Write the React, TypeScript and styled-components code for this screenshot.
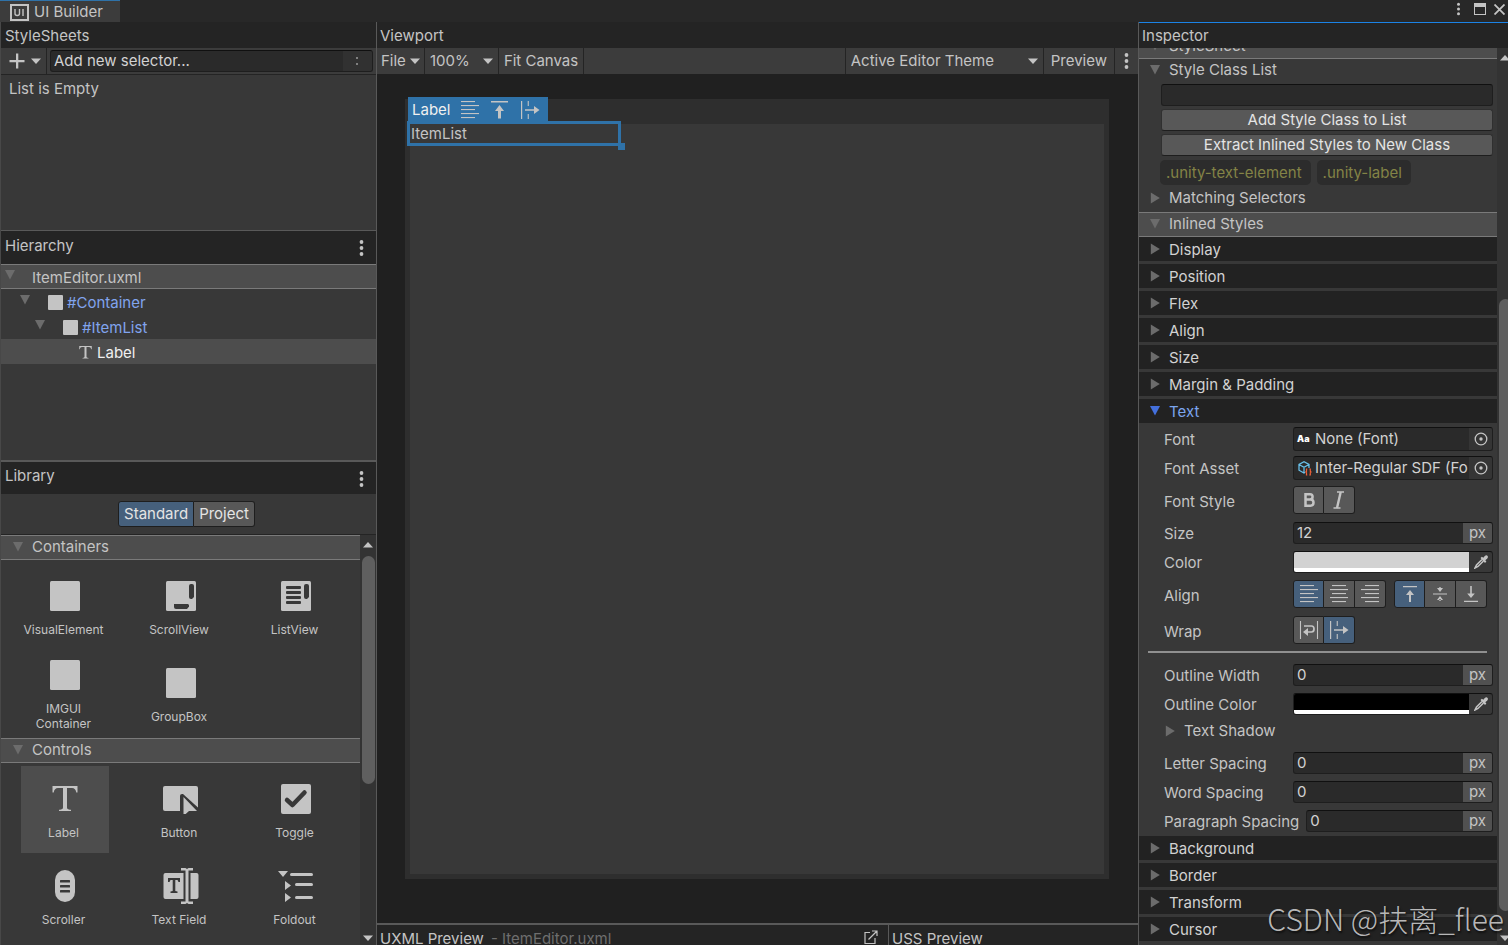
import React from 'react';
import styled, { createGlobalStyle, css } from 'styled-components';

const color = {
  bg: '#383838',
  dark: '#242424',
  darker: '#202020',
  section: '#222222',
  toolbar: '#3c3c3c',
  header: '#4d4d4d',
  headerLine: '#7a7a7a',
  line: '#595959',
  field: '#2a2a2a',
  fieldLine: '#1e1e1e',
  button: '#585858',
  pressed: '#46607c',
  text: '#c4c4c4',
  bright: '#e4e4e4',
  icon: '#c4c4c4',
  link: '#81a4ee',
  select: '#2f72a8',
};

const GlobalStyle = createGlobalStyle`
  *, *::before, *::after { box-sizing: border-box; }
  body {
    margin: 0;
    background: ${color.dark};
    color: ${color.text};
    font: 15px/20px Inter, "Noto Sans CJK SC", sans-serif;
    overflow: hidden;
  }
  button, input, select { font: inherit; color: inherit; margin: 0; padding: 0; border: 0; background: none; border-radius: 0; outline: 0; }
  h2 { margin: 0; font: inherit; }
  ul { margin: 0; padding: 0; list-style: none; }
  svg { display: block; flex: none; }
`;

/* ---------- window frame ---------- */

const Window = styled.div`
  display: flex;
  flex-direction: column;
  height: 100vh;
  position: relative;
  overflow: hidden;
`;

const TitleBar = styled.header`
  display: flex;
  justify-content: space-between;
  height: 22px;
  flex: none;
  background: #282828;
`;

const WindowTab = styled.button`
  display: flex;
  align-items: center;
  gap: 5px;
  width: 120px;
  padding: 1px 0 0 10px;
  border-top: 1px solid ${color.select};
  background: ${color.toolbar};
`;

const WindowButtons = styled.div`
  display: flex;
  align-items: center;
  gap: 8px;
  height: 18px;
  padding-right: 3px;
  button:first-child { margin-right: 5px; }
`;

const IconButton = styled.button`
  display: flex;
  align-items: center;
  justify-content: center;
`;

const Columns = styled.div`
  display: grid;
  grid-template-columns: 377px minmax(0, 1fr) 370px;
  flex: 1;
  min-height: 0;
`;

const PanelTitle = styled.h2`
  display: flex;
  align-items: center;
  flex: none;
  height: 26px;
  padding: 1px 4px 0;
  background: ${color.dark};
`;

const ViewportTitle = styled(PanelTitle)`
  padding-left: 3px;
`;

const DockTitle = styled(PanelTitle)<{ $height: number }>`
  justify-content: space-between;
  height: ${p => p.$height}px;
  padding: 0 12px 4px 4px;
`;

const KebabButton = styled(IconButton)`
  padding-top: 5px;
`;

const Toolbar = styled.div`
  display: flex;
  align-items: stretch;
  flex: none;
  height: 26px;
  background: ${color.toolbar};
`;

/* ---------- left column ---------- */

const LeftColumn = styled.aside`
  display: flex;
  flex-direction: column;
  min-height: 0;
  background: ${color.bg};
  border-left: 1px solid #484848;
  border-right: 1px solid ${color.line};
`;

const StyleSheetsPanel = styled.section`
  flex: none;
  height: 208px;
`;

const HierarchyPanel = styled.section`
  flex: none;
  height: 230px;
  border-top: 1px solid ${color.line};
`;

const LibraryPanel = styled.section`
  display: flex;
  flex-direction: column;
  flex: 1;
  min-height: 0;
  border-top: 2px solid ${color.line};
`;

const SelectorBar = styled(Toolbar)`
  height: 27px;
  border-bottom: 1px solid ${color.dark};
  align-items: center;
`;

const AddButton = styled.button`
  display: flex;
  align-items: center;
  gap: 6px;
  height: 26px;
  width: 46px;
  padding-left: 8px;
  border-right: 1px solid ${color.dark};
`;

const FieldBox = styled.div`
  display: flex;
  flex: 1;
  min-width: 0;
  height: 22px;
  background: ${color.field};
  border: 1px solid ${color.fieldLine};
  border-top-color: #101010;
  border-radius: 3px;
  overflow: hidden;
`;

const SelectorField = styled(FieldBox)`
  margin: 0 3px;
`;

const TextInput = styled.input`
  flex: 1;
  width: 0;
  min-width: 0;
  padding-left: 3px;
  color: #d2d2d2;
  &::placeholder { color: #d2d2d2; opacity: 1; }
`;

const FieldMenu = styled(IconButton)`
  width: 29px;
  background: #313131;
`;

const EmptyNote = styled.p`
  margin: 4px 8px;
`;

const TreeItem = styled.li<{ $depth: number; $kind?: 'root' | 'selected' | 'named' }>`
  display: flex;
  align-items: center;
  height: 25px;
  padding: 2px 0 0 ${p => 4 + p.$depth * 15}px;
  color: ${p => (p.$kind === 'named' ? color.link : p.$kind === 'selected' ? '#f0f0f0' : color.text)};
  ${p => p.$kind === 'selected' && css`background: ${color.header};`}
  ${p => p.$kind === 'root' && css`
    background: ${color.header};
    border-top: 1px solid ${color.headerLine};
    border-bottom: 1px solid ${color.headerLine};
  `}
`;

const TreeToggle = styled.button`
  width: 28px;
  height: 14px;
  flex: none;
  margin-bottom: 5px;
`;

const RootToggle = styled(TreeToggle)`
  width: 27px;
`;

const TreeIcon = styled.span`
  width: 19px;
`;

const TabStrip = styled.div`
  display: flex;
  justify-content: center;
  flex: none;
  height: 41px;
  padding: 7px 4px 7px 0;
  border-bottom: 1px solid ${color.dark};
`;

const SegmentButton = styled.button<{ $on?: boolean }>`
  display: flex;
  align-items: center;
  justify-content: center;
  padding: 0 5px;
  background: ${p => (p.$on ? color.pressed : color.button)};
  color: ${color.bright};
  border: 1px solid ${color.fieldLine};
  border-left-width: 0;
  &:first-child { border-left-width: 1px; border-radius: 3px 0 0 3px; }
  &:last-child { border-radius: 0 3px 3px 0; }
`;

const Scroller = styled.div`
  display: flex;
  flex: 1;
  min-height: 0;
`;

const ScrollBody = styled.div`
  flex: 1;
  min-width: 0;
  overflow: hidden;
`;

const ScrollBar = styled.div<{ $width: number }>`
  display: flex;
  flex-direction: column;
  align-items: flex-start;
  flex: none;
  width: ${p => p.$width}px;
  padding-left: 2px;
  background: #333333;
  overflow: hidden;
`;

const ScrollArrow = styled.button<{ $height: number }>`
  display: flex;
  align-items: center;
  flex: none;
  height: ${p => p.$height}px;
  padding-left: 1px;
`;

const ScrollThumb = styled.div<{ $before: number; $size: number; $after: number }>`
  display: grid;
  grid-template-rows: ${p => p.$before}fr ${p => p.$size}fr ${p => p.$after}fr;
  flex: 1;
  width: 13px;
  &::before {
    content: '';
    grid-row: 2;
    background: #5f5f5f;
    border-radius: 7px;
  }
`;

const FoldoutBar = styled.button`
  display: flex;
  align-items: center;
  gap: 9px;
  width: 100%;
  height: 25px;
  padding: 0 0 2px 11px;
  background: ${color.header};
  border-top: 1px solid ${color.headerLine};
  border-bottom: 1px solid ${color.headerLine};
`;

const LibraryBar = styled(FoldoutBar)`
  padding-left: 12px;
`;

const ItemGrid = styled.div`
  display: grid;
  grid-template-columns: repeat(3, 88px);
  grid-auto-rows: 87px;
  justify-content: space-between;
  padding: 3px 20px 1px;
`;

const LibraryItem = styled.button<{ $selected?: boolean }>`
  display: flex;
  flex-direction: column;
  align-items: center;
  justify-content: center;
  gap: 11px;
  padding: 4px 3px 0 0;
  font-size: 12px;
  line-height: 15px;
  white-space: pre-line;
  background: ${p => (p.$selected ? color.header : 'transparent')};
`;

/* ---------- viewport ---------- */

const CenterColumn = styled.main`
  display: flex;
  flex-direction: column;
  min-width: 0;
  min-height: 0;
`;

const ToolButton = styled.button<{ $pad?: number }>`
  display: flex;
  align-items: center;
  gap: 4px;
  padding: 0 ${p => p.$pad ?? 5}px;
  white-space: nowrap;
  border-right: 1px solid ${color.dark};
`;

const ToolSelect = styled.div<{ $width: number; $end?: boolean }>`
  position: relative;
  display: flex;
  width: ${p => p.$width}px;
  border-right: 1px solid ${color.dark};
  ${p => p.$end && css`margin-left: auto; border-left: 1px solid ${color.dark};`}
  select { appearance: none; width: 100%; padding-left: 5px; }
  svg { position: absolute; right: 5px; top: 10px; pointer-events: none; }
`;

const MenuButton = styled(IconButton)`
  width: 23px;
`;

const Stage = styled.div`
  display: flex;
  flex: 1;
  min-height: 0;
  padding: 25px 29px 44px 28px;
  background: ${color.darker};
`;

const CanvasFrame = styled.div`
  position: relative;
  display: flex;
  flex: 1;
  padding: 25px 5px 5px;
  background: #2e2e2e;
`;

const CanvasPage = styled.div`
  flex: 1;
  background: ${color.bg};
`;

const ElementTag = styled.div`
  position: absolute;
  left: 3px;
  top: -2px;
  display: flex;
  align-items: center;
  gap: 10px;
  width: 140px;
  height: 25px;
  padding-left: 4px;
  background: ${color.select};
  color: #f0f0f0;
`;

const ElementOutline = styled.div`
  position: absolute;
  left: 2px;
  top: 22px;
  width: 214px;
  height: 25px;
  padding-left: 1px;
  line-height: 19px;
  border: 3px solid ${color.select};
  &::after {
    content: '';
    position: absolute;
    right: -7px;
    bottom: -7px;
    width: 7px;
    height: 7px;
    background: ${color.select};
  }
`;

const PreviewBar = styled.footer`
  display: grid;
  grid-template-columns: minmax(0, 1fr) 250px;
  flex: none;
  height: 22px;
  border-top: 2px solid ${color.line};
  background: ${color.dark};
  overflow: hidden;
`;

const PreviewPane = styled.div`
  display: flex;
  justify-content: space-between;
  height: 20px;
  padding: 4px 10px 0 3px;
  line-height: 20px;
  & + & { border-left: 1px solid ${color.line}; }
`;

const Faded = styled.span`
  margin-left: 7px;
  color: #6e6e6e;
`;

/* ---------- inspector ---------- */

const Inspector = styled.aside`
  display: flex;
  flex-direction: column;
  min-height: 0;
  background: ${color.bg};
  border-left: 1px solid ${color.line};
`;

const InspectorTitle = styled(PanelTitle)`
  border-top: 1px solid #1b83e6;
  padding: 0 3px;
`;

const ScrolledContent = styled.div`
  margin-top: -14px;
`;

const ClassSection = styled.div`
  display: flex;
  flex-direction: column;
  gap: 3px;
  padding: 3px 4px 3px 22px;
`;

const PlainFoldout = styled.button`
  display: flex;
  align-items: center;
  gap: 9px;
  height: 22px;
  padding: 0 0 1px 11px;
`;

const ClassInput = styled.input`
  flex: none;
  height: 22px;
  background: ${color.field};
  border: 1px solid ${color.fieldLine};
  border-top-color: #101010;
  border-radius: 3px;
  padding: 0 4px;
`;

const WideButton = styled.button`
  height: 22px;
  background: ${color.button};
  color: ${color.bright};
  border: 1px solid #303030;
  border-bottom-color: ${color.fieldLine};
  border-radius: 3px;
  line-height: 20px;
`;

const Tags = styled.div`
  display: flex;
  gap: 6px;
  padding-top: 1px;
  margin-left: -1px;
`;

const Tag = styled.span`
  height: 25px;
  padding: 0 9px 0 6px;
  line-height: 25px;
  border-radius: 5px;
  background: #2c2c2c;
  color: #838346;
`;

const MatchingFoldout = styled(PlainFoldout)`
  margin: -1px 0 3px;
`;

const SectionList = styled.div`
  display: flex;
  flex-direction: column;
  gap: 3px;
`;

const SectionFoldout = styled.button<{ $active?: boolean }>`
  display: flex;
  align-items: center;
  gap: 9px;
  height: 24px;
  padding: 1px 0 0 11px;
  background: ${color.section};
  color: ${p => (p.$active ? '#7ba5ee' : '#d2d2d2')};
  svg { margin-bottom: 1px; }
`;

const TextFields = styled.div`
  padding: 1px 4px 1px 25px;
`;

const FieldRow = styled.div<{ $tall?: boolean }>`
  display: flex;
  align-items: center;
  height: ${p => (p.$tall ? 36 : 29)}px;
`;

const FieldLabel = styled.label`
  flex: none;
  min-width: 122px;
  margin-right: 7px;
  padding-top: 3px;
`;

const Unit = styled.button`
  width: 29px;
  background: #515151;
  line-height: 18px;
`;

const ObjectField = styled(FieldBox)`
  height: 24px;
  align-items: center;
  padding-left: 3px;
`;

const Picker = styled(IconButton)`
  width: 23px;
  height: 22px;
  background: #353535;
`;

const ColorInput = styled.input`
  appearance: none;
  flex: 1;
  min-width: 0;
  height: 20px;
  border-bottom: 4px solid #ffffff;
  &::-webkit-color-swatch-wrapper { padding: 0; }
  &::-webkit-color-swatch { border: 0; border-radius: 0; }
`;

const ColorBox = styled(FieldBox)`
  background: ${color.bg};
`;

const DropperButton = styled(IconButton)`
  width: 23px;
`;

const Toggles = styled.div`
  display: flex;
  height: 28px;
  margin-right: 8px;
  button { width: 31px; padding: 0; }
`;

const Divider = styled.hr`
  height: 2px;
  margin: 3px 6px 7px -16px;
  border: 0;
  background: #909090;
`;

const ShadowFoldout = styled.button`
  display: flex;
  align-items: center;
  gap: 9px;
  height: 26px;
  margin-bottom: 4px;
  padding-left: 1px;
`;

const Watermark = styled.div`
  position: absolute;
  right: 4px;
  bottom: 7px;
  font: 300 30px/40px "Noto Sans CJK SC", sans-serif;
  color: rgba(205, 205, 205, 0.9);
  text-shadow: 1px 2px 2px rgba(0, 0, 0, 0.6);
  pointer-events: none;
`;

/* ---------- icons ---------- */

const Arrow = ({ open, fill = '#6c6c6c' }: { open?: boolean; fill?: string }) => (
  <svg width="10" height="12" viewBox="0 0 10 12" fill={fill}>
    {open ? <path d="M0 1h10L5 10.500z" /> : <path d="M0.800 0.500v11L9.800 6z" />}
  </svg>
);

const Caret = ({ up }: { up?: boolean }) => (
  <svg width="10" height="6" viewBox="0 0 10 6" fill={color.icon}>
    <path d={up ? 'M5 0l5 5.500H0z' : 'M0 0.500h10L5 6z'} />
  </svg>
);

const Kebab = ({ small }: { small?: boolean }) => (
  <svg width="5" height="16" viewBox="0 0 5 16" fill={color.icon}>
    {(small ? [3.3, 8, 12.7] : [2, 8, 14]).map(y => (
      <circle key={y} cx="2.500" cy={y} r={small ? 1.5 : 1.9} />
    ))}
  </svg>
);

const Lines = ({ align }: { align: 'left' | 'center' | 'right' }) => {
  const spans = [14, 18, 14, 18, 14];
  return (
    <svg width="20" height="18" viewBox="0 0 20 18" fill={color.icon}>
      {spans.map((w, i) => {
        const x = align === 'left' ? 1 : align === 'center' ? (20 - w) / 2 : 19 - w;
        return <rect key={i} x={x} y={i * 4} width={w} height="1.100" />;
      })}
    </svg>
  );
};

const AlignTop = () => (
  <svg width="20" height="18" viewBox="0 0 20 18" fill={color.icon}>
    <path d="M1 0h17v1.400H1zM9.500 4l4.500 6h-3v7.500h-3V10h-3z" />
  </svg>
);
const AlignTopSmall = () => (
  <svg width="18" height="18" viewBox="0 0 18 18" fill={color.icon}>
    <path d="M2 1h14v1.200H2zM9 5l4 5h-3v7H8v-7H5z" />
  </svg>
);
const AlignMiddle = () => (
  <svg width="18" height="18" viewBox="0 0 18 18" fill={color.icon}>
    <path d="M2 8.400h14v1.200H2zM6 3h6L9 7zM6 15h6l-3-4zM8.300 2h1.400v2H8.300zM8.300 14h1.400v2H8.300z" />
  </svg>
);
const AlignBottom = () => (
  <svg width="18" height="18" viewBox="0 0 18 18" fill={color.icon}>
    <path d="M2 15.800h14V17H2zM8.200 1h1.600v7.500h3L9 13 5.200 8.500h3z" />
  </svg>
);
const NoWrap = () => (
  <svg width="20" height="18" viewBox="0 0 20 18" fill={color.icon}>
    <path d="M1 0h1.200v18H1zM7.700 0h1.100v5H7.700zM7.700 13h1.100v5H7.700zM5 8.200h9V5l5.500 4-5.500 4V9.800H5z" />
  </svg>
);
const WrapText = () => (
  <svg width="20" height="18" viewBox="0 0 20 18" fill="none" stroke={color.icon}>
    <path d="M1.500 0v18M18.500 0v18" strokeWidth="1.100" />
    <path d="M5 5h7.500q2.500 0 2.500 3t-2.500 3H8" strokeWidth="1.700" />
    <path d="M9 7v8l-5-4z" fill={color.icon} stroke="none" />
  </svg>
);

const SerifT = ({ size }: { size: number }) => (
  <svg width={size} height={size} viewBox="0 0 30 30" fill={color.icon}>
    <path d="M2.500 2h25v6.500h-1.200C25.800 5.500 24.500 4 22 4h-5v19c0 2 .8 2.500 4 2.800V27H9v-1.200c3.200-.3 4-.8 4-2.800V4H8C5.500 4 4.200 5.500 3.700 8.500H2.500z" />
  </svg>
);

const Square = ({ size = 30 }: { size?: number }) => (
  <svg width={size} height={size} viewBox="0 0 30 30">
    <rect width="30" height="30" rx={size < 20 ? 2 : 1.5} fill={color.icon} />
  </svg>
);

const VerticalSlot = () => <path d="M23 5q0-2 2-2h1q2 0 2 2v11l-2 2h-1q-2 0-2-2z" fill={color.bg} />;

const ScrollViewIcon = () => (
  <svg width="30" height="30" viewBox="0 0 30 30">
    <rect width="30" height="30" rx="1.500" fill={color.icon} />
    <VerticalSlot />
    <path d="M8 23h14l1 1v1.500L21 28H10q-2 0-2-2z" fill={color.bg} />
  </svg>
);
const ListViewIcon = () => (
  <svg width="30" height="30" viewBox="0 0 30 30">
    <rect width="30" height="30" rx="1.500" fill={color.icon} />
    <VerticalSlot />
    {[5, 10, 15, 20].map(y => (
      <rect key={y} x="5" y={y} width="15" height="3" rx="1" fill={color.bg} />
    ))}
  </svg>
);
const ButtonIcon = () => (
  <svg width="36" height="30" viewBox="0 0 36 30">
    <rect y="2" width="35" height="25" rx="2" fill={color.icon} />
    <path d="M17 12q0-2.500 3-2L35.500 24v3H17z" fill={color.bg} />
    <path d="M20.500 13L34 27h-8l-5.500 5z" fill={color.icon} />
  </svg>
);
const ToggleIcon = () => (
  <svg width="30" height="30" viewBox="0 0 30 30">
    <rect width="30" height="30" rx="2" fill={color.icon} />
    <path d="M6 16l5.500 5L23.500 8.500" fill="none" stroke={color.bg} strokeWidth="4.500" strokeLinecap="round" strokeLinejoin="round" />
  </svg>
);
const ScrollerIcon = () => (
  <svg width="30" height="34" viewBox="0 0 30 34">
    <rect x="5" y="1" width="20" height="32" rx="10" fill={color.icon} />
    {[11, 16, 21].map(y => (
      <rect key={y} x="10" y={y} width="10" height="2.500" rx="0.500" fill={color.bg} />
    ))}
  </svg>
);
const TextFieldIcon = () => (
  <svg width="36" height="36" viewBox="0 0 36 36">
    <rect x="0.500" y="5" width="35" height="26" rx="2" fill={color.icon} />
    <path d="M5 10h12v4h-1.500l-1-2H12.300v11l2.200.5V25h-7v-1.500l2.200-.5V12H7.500l-1 2H5z" fill={color.bg} />
    <rect x="20.500" y="3" width="7" height="30" fill={color.bg} />
    <path d="M18 0h4.500l1.500 1 1.500-1H30v2.600h-4.500v30.800H30V36h-4.500L24 35l-1.500 1H18v-2.600h4.500V2.600H18z" fill={color.icon} />
  </svg>
);
const FoldoutIcon = () => (
  <svg width="36" height="32" viewBox="0 0 36 32" fill={color.icon}>
    <path d="M0 1h10L5 7zM7 11l6 4.500L7 20zM7 23l6 4.500L7 32z" />
    <rect x="12" y="3" width="23" height="3" rx="1.500" />
    <rect x="17" y="13" width="18" height="3" rx="1.500" />
    <rect x="17" y="26" width="18" height="3" rx="1.500" />
  </svg>
);

const Plus = () => (
  <svg width="16" height="16" viewBox="0 0 16 16" fill={color.icon}>
    <path d="M7 0.500h2.300V7h6.200v2.300H9.300v6.200H7V9.300H0.500V7H7z" />
  </svg>
);
const BuilderLogo = () => (
  <svg width="19" height="17" viewBox="0 0 19 17" fill="none" stroke={color.icon}>
    <rect x="1" y="1" width="17" height="15" strokeWidth="2" />
    <path d="M5 5v4.500q0 2 2.250 2T9.500 9.500V5M13 5v7" strokeWidth="1.400" />
  </svg>
);
const Maximize = () => (
  <svg width="12" height="12" viewBox="0 0 12 12">
    <path d="M0 0h12v12H0zM1 4v7h10V4z" fill={color.icon} fillRule="evenodd" />
  </svg>
);
const Close = () => (
  <svg width="11" height="11" viewBox="0 0 11 11" stroke={color.icon} strokeWidth="1.800">
    <path d="M0.500 0.500l10 10M10.500 0.500l-10 10" />
  </svg>
);
const External = () => (
  <svg width="14" height="14" viewBox="0 0 14 14" fill="none" stroke={color.icon} strokeWidth="1.200">
    <path d="M6 2.500H1v11h10V8M4.500 9.500L12.500 1.500M8 1h5v5" />
  </svg>
);
const Target = () => (
  <svg width="14" height="14" viewBox="0 0 14 14">
    <circle cx="7" cy="7" r="5.800" fill="none" stroke={color.icon} strokeWidth="1.300" />
    <circle cx="7" cy="7" r="1.700" fill={color.icon} />
  </svg>
);
const Dropper = () => (
  <svg width="14" height="14" viewBox="0 0 14 14">
    <path d="M8 4.500L2.500 10 1 13l3-1.500L9.500 6" fill="none" stroke={color.icon} strokeWidth="1.500" />
    <path d="M6.500 3l1.400-1.300L9.300 2.800l1.700-2q1.800-1 2.600.2t-.3 2.500l-2 1.800 1.100 1.300L11 8z" fill={color.icon} />
  </svg>
);
const BoldIcon = () => (
  <svg width="14" height="16" viewBox="0 0 14 16">
    <path d="M3.500 2.200h4.500q2.600 0 2.600 2.600T8 7.500H3.500zM3.500 7.500h5q3 0 3 3.100t-3 3.100h-5z" fill="none" stroke={color.icon} strokeWidth="2.500" />
  </svg>
);
const ItalicIcon = () => (
  <svg width="14" height="18" viewBox="0 0 14 18">
    <path d="M5 1h7M1.500 17h7" stroke={color.icon} strokeWidth="1.600" />
    <path d="M8.700 1L5 17" stroke={color.icon} strokeWidth="2.400" />
  </svg>
);
const FontBadge = styled.span`
  width: 15px;
  font-size: 9px;
  font-weight: 900;
  color: #ffffff;
`;
const AssetIcon = () => (
  <svg width="15" height="16" viewBox="0 0 15 16" fill="none">
    <path d="M8 12.500l-1 .5-5-2.800V4.500L7 1.700l5 2.800V8M2 4.500l5 2.800 5-2.800M7 7.300V13" stroke="#68bfe8" strokeWidth="1.300" />
    <path d="M10.300 9h-.8v2.500l-.7.500.7.500V15h.8M12.300 9h1v2.500l.7.500-.7.500V15h-1" stroke="#f06038" strokeWidth="1.200" />
  </svg>
);

/* ---------- library ---------- */

type Item = { name: string; icon: React.ReactNode; selected?: boolean };

const containers: Item[] = [
  { name: 'VisualElement', icon: <Square /> },
  { name: 'ScrollView', icon: <ScrollViewIcon /> },
  { name: 'ListView', icon: <ListViewIcon /> },
  { name: 'IMGUI\nContainer', icon: <Square /> },
  { name: 'GroupBox', icon: <Square /> },
];

const controls: Item[] = [
  { name: 'Label', icon: <SerifT size={30} />, selected: true },
  { name: 'Button', icon: <ButtonIcon /> },
  { name: 'Toggle', icon: <ToggleIcon /> },
  { name: 'Scroller', icon: <ScrollerIcon /> },
  { name: 'Text Field', icon: <TextFieldIcon /> },
  { name: 'Foldout', icon: <FoldoutIcon /> },
];

const IconSlot = styled.span`
  display: flex;
  align-items: center;
  justify-content: center;
  width: 36px;
  height: 30px;
  margin-left: 3px;
`;

const LibraryGrid = ({ items }: { items: Item[] }) => (
  <ItemGrid>
    {items.map(item => (
      <LibraryItem key={item.name} $selected={item.selected}>
        <IconSlot>{item.icon}</IconSlot>
        <span>{item.name}</span>
      </LibraryItem>
    ))}
  </ItemGrid>
);

/* ---------- inspector fields ---------- */

const LengthField = ({ id, label, value }: { id: string; label: string; value: string }) => (
  <FieldRow>
    <FieldLabel htmlFor={id}>{label}</FieldLabel>
    <FieldBox>
      <TextInput id={id} defaultValue={value} />
      <Unit>px</Unit>
    </FieldBox>
  </FieldRow>
);

const ColorField = ({ id, label, value }: { id: string; label: string; value: string }) => (
  <FieldRow>
    <FieldLabel htmlFor={id}>{label}</FieldLabel>
    <ColorBox>
      <ColorInput id={id} type="color" defaultValue={value} />
      <DropperButton aria-label="Pick colour"><Dropper /></DropperButton>
    </ColorBox>
  </FieldRow>
);

const AssetField = ({ id, label, value, icon }: { id: string; label: string; value: string; icon: React.ReactNode }) => (
  <FieldRow>
    <FieldLabel htmlFor={id}>{label}</FieldLabel>
    <ObjectField>
      {icon}
      <TextInput id={id} readOnly value={value} />
      <Picker aria-label="Select object"><Target /></Picker>
    </ObjectField>
  </FieldRow>
);

const ToggleGroup = ({ options }: { options: { name: string; icon: React.ReactNode; on?: boolean }[] }) => (
  <Toggles>
    {options.map(o => (
      <SegmentButton key={o.name} aria-label={o.name} aria-pressed={!!o.on} $on={o.on}>{o.icon}</SegmentButton>
    ))}
  </Toggles>
);

const Section = ({ name }: { name: string }) => (
  <SectionFoldout><Arrow />{name}</SectionFoldout>
);

export default function App() {
  return (
    <Window>
      <GlobalStyle />
      <TitleBar>
        <WindowTab><BuilderLogo />UI Builder</WindowTab>
        <WindowButtons>
          <IconButton aria-label="Menu"><Kebab small /></IconButton>
          <IconButton aria-label="Maximize"><Maximize /></IconButton>
          <IconButton aria-label="Close"><Close /></IconButton>
        </WindowButtons>
      </TitleBar>
      <Columns>
        <LeftColumn>
          <StyleSheetsPanel>
            <PanelTitle>StyleSheets</PanelTitle>
            <SelectorBar>
              <AddButton aria-label="Add stylesheet"><Plus /><Caret /></AddButton>
              <SelectorField>
                <TextInput aria-label="Selector" placeholder="Add new selector..." />
                <FieldMenu aria-label="Selector options">
                  <svg width="3" height="8" viewBox="0 0 3 8" fill="#808080"><path d="M0 0h2v2H0zM0 6h2v2H0z" /></svg>
                </FieldMenu>
              </SelectorField>
            </SelectorBar>
            <EmptyNote>List is Empty</EmptyNote>
          </StyleSheetsPanel>

          <HierarchyPanel>
            <DockTitle $height={33}>Hierarchy<KebabButton aria-label="Hierarchy menu"><Kebab /></KebabButton></DockTitle>
            <ul>
              <TreeItem $depth={0} $kind="root"><RootToggle aria-label="Collapse"><Arrow open /></RootToggle>ItemEditor.uxml</TreeItem>
              <TreeItem $depth={1} $kind="named"><TreeToggle aria-label="Collapse"><Arrow open /></TreeToggle><TreeIcon><Square size={15} /></TreeIcon>#Container</TreeItem>
              <TreeItem $depth={2} $kind="named"><TreeToggle aria-label="Collapse"><Arrow open /></TreeToggle><TreeIcon><Square size={15} /></TreeIcon>#ItemList</TreeItem>
              <TreeItem $depth={3} $kind="selected"><TreeToggle as="span" /><TreeIcon><SerifT size={15} /></TreeIcon>Label</TreeItem>
            </ul>
          </HierarchyPanel>

          <LibraryPanel>
            <DockTitle $height={32}>Library<KebabButton aria-label="Library menu"><Kebab /></KebabButton></DockTitle>
            <TabStrip>
              <SegmentButton $on>Standard</SegmentButton>
              <SegmentButton>Project</SegmentButton>
            </TabStrip>
            <Scroller>
              <ScrollBody>
                <LibraryBar><Arrow open />Containers</LibraryBar>
                <LibraryGrid items={containers} />
                <LibraryBar><Arrow open />Controls</LibraryBar>
                <LibraryGrid items={controls} />
              </ScrollBody>
              <ScrollBar $width={16}>
                <ScrollArrow $height={20} aria-label="Scroll up"><Caret up /></ScrollArrow>
                <ScrollThumb $before={1} $size={228} $after={147} />
                <ScrollArrow $height={14} aria-label="Scroll down"><Caret /></ScrollArrow>
              </ScrollBar>
            </Scroller>
          </LibraryPanel>
        </LeftColumn>

        <CenterColumn>
          <ViewportTitle>Viewport</ViewportTitle>
          <Toolbar>
            <ToolButton $pad={4}>File<Caret /></ToolButton>
            <ToolSelect $width={74}>
              <select aria-label="Zoom"><option>100%</option></select>
              <Caret />
            </ToolSelect>
            <ToolButton>Fit Canvas</ToolButton>
            <ToolSelect $width={199} $end>
              <select aria-label="Theme"><option>Active Editor Theme</option></select>
              <Caret />
            </ToolSelect>
            <ToolButton $pad={7}>Preview</ToolButton>
            <MenuButton aria-label="Viewport menu"><Kebab /></MenuButton>
          </Toolbar>
          <Stage>
            <CanvasFrame>
              <CanvasPage />
              <ElementTag>Label<Lines align="left" /><AlignTop /><NoWrap /></ElementTag>
              <ElementOutline>ItemList</ElementOutline>
            </CanvasFrame>
          </Stage>
          <PreviewBar>
            <PreviewPane>
              <span>UXML Preview<Faded>- ItemEditor.uxml</Faded></span>
              <IconButton aria-label="Open in editor"><External /></IconButton>
            </PreviewPane>
            <PreviewPane>USS Preview</PreviewPane>
          </PreviewBar>
        </CenterColumn>

        <Inspector>
          <InspectorTitle>Inspector</InspectorTitle>
          <Scroller>
            <ScrollBody>
              <ScrolledContent>
                <FoldoutBar><Arrow open />StyleSheet</FoldoutBar>
                <PlainFoldout><Arrow open />Style Class List</PlainFoldout>
                <ClassSection>
                  <ClassInput aria-label="Style class" />
                  <WideButton>Add Style Class to List</WideButton>
                  <WideButton>Extract Inlined Styles to New Class</WideButton>
                  <Tags>
                    <Tag>.unity-text-element</Tag>
                    <Tag>.unity-label</Tag>
                  </Tags>
                </ClassSection>
                <MatchingFoldout><Arrow />Matching Selectors</MatchingFoldout>
                <FoldoutBar><Arrow open />Inlined Styles</FoldoutBar>
                <SectionList>
                  {['Display', 'Position', 'Flex', 'Align', 'Size', 'Margin & Padding'].map(n => <Section key={n} name={n} />)}
                  <SectionFoldout $active><Arrow open fill="#4470dc" />Text</SectionFoldout>
                </SectionList>
                <TextFields>
                  <AssetField id="font" label="Font" value="None (Font)" icon={<FontBadge>Aa</FontBadge>} />
                  <AssetField id="asset" label="Font Asset" value="Inter-Regular SDF (Fo" icon={<AssetIcon />} />
                  <FieldRow $tall>
                    <FieldLabel as="span">Font Style</FieldLabel>
                    <ToggleGroup options={[{ name: 'Bold', icon: <BoldIcon /> }, { name: 'Italic', icon: <ItalicIcon /> }]} />
                  </FieldRow>
                  <LengthField id="size" label="Size" value="12" />
                  <ColorField id="color" label="Color" value="#d2d2d2" />
                  <FieldRow $tall>
                    <FieldLabel as="span">Align</FieldLabel>
                    <ToggleGroup options={[
                      { name: 'Left', icon: <Lines align="left" />, on: true },
                      { name: 'Center', icon: <Lines align="center" /> },
                      { name: 'Right', icon: <Lines align="right" /> },
                    ]} />
                    <ToggleGroup options={[
                      { name: 'Top', icon: <AlignTopSmall />, on: true },
                      { name: 'Middle', icon: <AlignMiddle /> },
                      { name: 'Bottom', icon: <AlignBottom /> },
                    ]} />
                  </FieldRow>
                  <FieldRow $tall>
                    <FieldLabel as="span">Wrap</FieldLabel>
                    <ToggleGroup options={[{ name: 'Wrap', icon: <WrapText /> }, { name: 'No wrap', icon: <NoWrap />, on: true }]} />
                  </FieldRow>
                  <Divider />
                  <LengthField id="outline-width" label="Outline Width" value="0" />
                  <ColorField id="outline-color" label="Outline Color" value="#000000" />
                  <ShadowFoldout><Arrow />Text Shadow</ShadowFoldout>
                  <LengthField id="letter" label="Letter Spacing" value="0" />
                  <LengthField id="word" label="Word Spacing" value="0" />
                  <LengthField id="paragraph" label="Paragraph Spacing" value="0" />
                </TextFields>
                <SectionList>
                  {['Background', 'Border', 'Transform', 'Cursor'].map(n => <Section key={n} name={n} />)}
                </SectionList>
              </ScrolledContent>
            </ScrollBody>
            <ScrollBar $width={11}>
              <ScrollArrow $height={20} aria-label="Scroll up"><Caret up /></ScrollArrow>
              <ScrollThumb $before={231} $size={612} $after={20} />
              <ScrollArrow $height={14} aria-label="Scroll down"><Caret /></ScrollArrow>
            </ScrollBar>
          </Scroller>
        </Inspector>
      </Columns>
      <Watermark>CSDN @扶离_flee</Watermark>
    </Window>
  );
}
